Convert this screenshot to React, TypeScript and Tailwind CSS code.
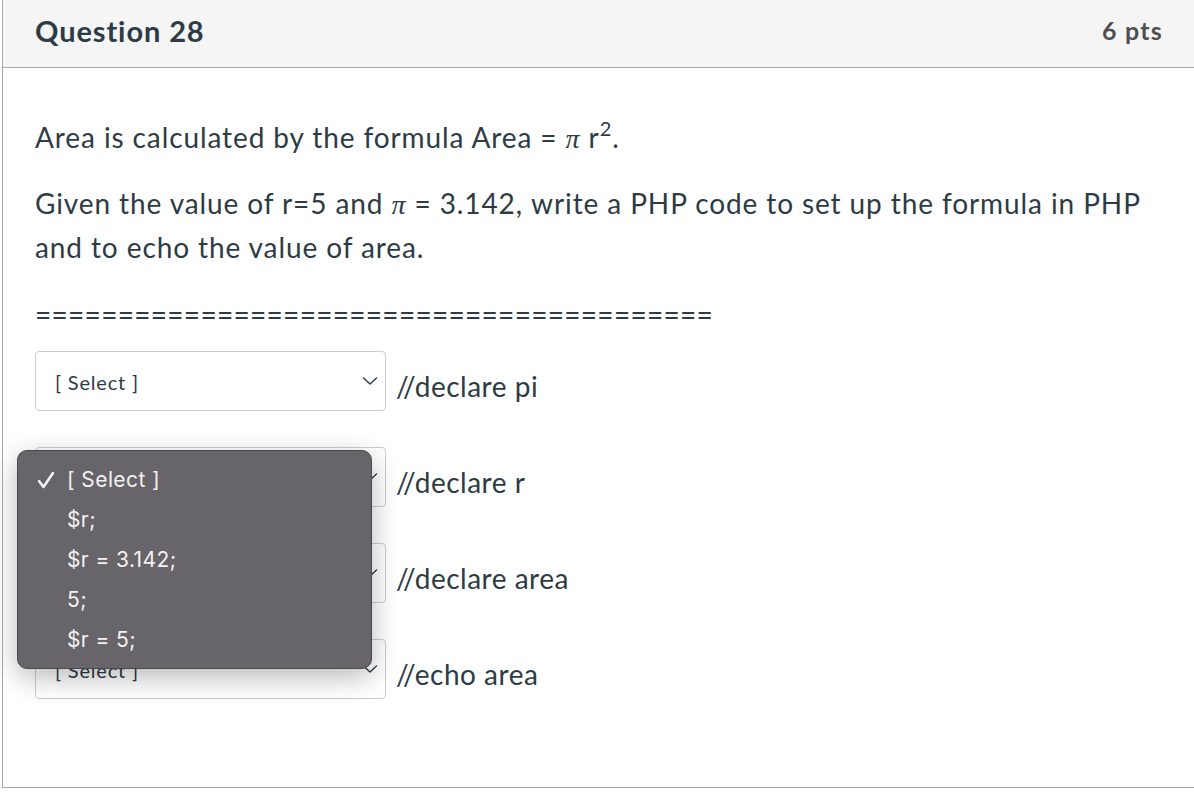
import React from "react";

const Chevron = () => (
  <svg width="16" height="10" viewBox="0 0 16 10" className="shrink-0">
    <polyline points="1.5,2 8,8 14.5,2" fill="none" stroke="#2d3b45" strokeWidth="1.4" strokeLinecap="round" strokeLinejoin="round" />
  </svg>
);

const SelectRow = ({ label }: { label: string }) => (
  <div className="flex items-center h-[60px]">
    <div className="w-[351px] h-[60px] border border-[#c7cdd1] rounded-[4px] bg-white flex items-center justify-between pl-[19px] pr-[7px] shrink-0">
      <span className="text-[20px] tracking-[0.8px] text-[#2d3b45] pt-[1px]">[ Select ]</span>
      <Chevron />
    </div>
    <span className="ml-[10px] text-[28px] tracking-[0.5px] text-[#2d3b45] leading-[43px] pt-[10px]">{label}</span>
  </div>
);

export default function App() {
  const items = ["[ Select ]", "$r;", "$r = 3.142;", "5;", "$r = 5;"];
  return (
    <div className="w-[1194px] h-[798px] bg-white relative overflow-hidden font-['Lato',sans-serif] text-[#2d3b45]">
      <div className="ml-[2px] w-[1200px] h-[788px] border-l border-b border-[#a8a8a8] flex flex-col">
        <div className="h-[68px] bg-[#f5f5f5] border-b border-[#a8a8a8] flex items-center justify-between pl-[32px] pr-[39px] pb-[5px] shrink-0">
          <span className="text-[29px] font-bold text-[#2d3b45] tracking-[0.9px]">Question 28</span>
          <span className="text-[25px] font-bold text-[#4f4f4f] tracking-[1.2px]">6 pts</span>
        </div>
        <div className="pl-[32px] pt-[48px] flex flex-col">
          <p className="text-[28px] tracking-[0.9px] leading-[43px] mb-[22px]">
            Area is calculated by the formula Area ={" "}
            <span className="font-['Liberation_Serif',serif] italic">π</span> r<sup className="text-[20px] -top-[0.6em]">2</sup>.
          </p>
          <p className="text-[28px] tracking-[0.9px] leading-[43px] max-w-[1135px] mb-[24px]">
            Given the value of r=5 and{" "}
            <span className="font-['Liberation_Serif',serif] italic">π</span> = 3.142, write a PHP code to set up the formula in PHP and to echo the value of area.
          </p>
          <p className="text-[28px] leading-[43px] mb-[15px] tracking-[0.3px]">
            =========================================
          </p>
          <div className="flex flex-col gap-[36px]">
            <SelectRow label="//declare pi" />
            <SelectRow label="//declare r" />
            <SelectRow label="//declare area" />
            <SelectRow label="//echo area" />
          </div>
        </div>
      </div>

      <div className="absolute left-[17px] top-[450px] w-[355px] h-[219px] rounded-[10px] bg-[#67646a] border border-[#4a484d] shadow-[0_8px_28px_rgba(0,0,0,0.28)] pt-[9px] font-['Inter',sans-serif] text-[21px] tracking-[0.4px] text-[#f2f2f2]">
        {items.map((it, i) => (
          <div key={i} className="h-[40px] flex items-center relative pl-[49px]">
            {i === 0 && (
              <svg width="18" height="18" viewBox="0 0 18 18" className="absolute left-[19px] top-[11px]">
                <polyline points="2,10 6.5,16 16,2" fill="none" stroke="#f2f2f2" strokeWidth="2.6" strokeLinecap="round" strokeLinejoin="round" />
              </svg>
            )}
            <span>{it}</span>
          </div>
        ))}
      </div>
    </div>
  );
}
